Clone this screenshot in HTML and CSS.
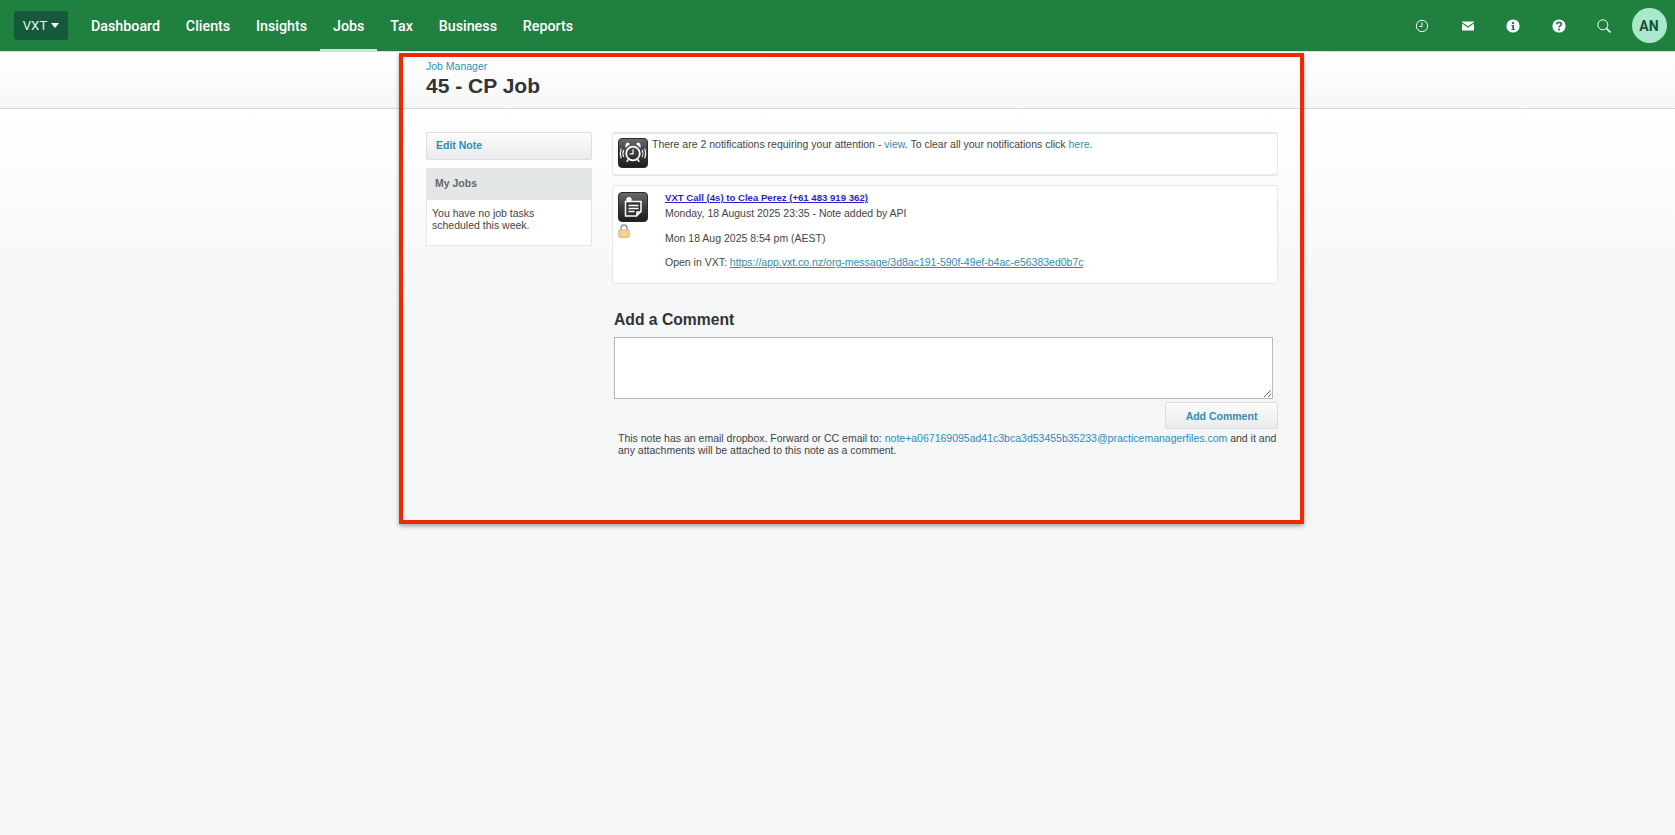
FILE: index.html
```html
<!DOCTYPE html>
<html lang="en">
<head>
    <meta charset="UTF-8">
    <meta name="viewport" content="width=device-width, initial-scale=1.0">
    <title>45 - CP Job</title>
    <link rel="stylesheet" href="styles.css">
</head>
<body>

<header class="topbar">
    <a href="#" class="org-switch">VXT <span class="caret"></span></a>
    <nav class="main-nav">
        <a href="#">Dashboard</a>
        <a href="#">Clients</a>
        <a href="#">Insights</a>
        <a href="#" class="active">Jobs</a>
        <a href="#">Tax</a>
        <a href="#">Business</a>
        <a href="#">Reports</a>
    </nav>
    <div class="top-icons">
        <!-- Recent -->
        <svg class="top-icon" viewBox="0 0 14 14" fill="none" stroke="#fff" stroke-width="1">
            <circle cx="7" cy="7" r="5.7"/>
            <path d="M7 3.4V7.5H4.2"/>
        </svg>
        <!-- Mail -->
        <svg class="top-icon" viewBox="0 0 14 14">
            <path fill="#fff" d="M1 2.5H13V11.5H1Z"/>
            <path fill="none" stroke="#1f8040" stroke-width="1.1" d="M1 3.8L7 8L13 3.8"/>
        </svg>
        <!-- Info -->
        <svg class="top-icon" viewBox="0 0 14 14">
            <circle cx="7" cy="7" r="6.6" fill="#fff"/>
            <circle cx="7" cy="3.9" r="1.2" fill="#1f8040"/>
            <path fill="#1f8040" d="M5.4 6H8V9.9H8.8V11H5.4V9.9H6.2V7.1H5.4Z"/>
        </svg>
        <!-- Help -->
        <svg class="top-icon" viewBox="0 0 14 14">
            <circle cx="7" cy="7" r="6.6" fill="#fff"/>
            <path fill="none" stroke="#1f8040" stroke-width="1.7" d="M4.6 5.3C4.8 3.8 5.9 3.3 7 3.3C8.4 3.3 9.4 4.1 9.4 5.2C9.4 6.6 7.1 6.7 7.1 8.6"/>
            <circle cx="7.1" cy="10.6" r="1.1" fill="#1f8040"/>
        </svg>
        <!-- Search -->
        <svg class="top-icon" viewBox="0 0 14 14" fill="none" stroke="#fff" stroke-width="1">
            <circle cx="5.8" cy="5.8" r="5"/>
            <path d="M9.4 9.4L13.4 13.4" stroke-width="1.5"/>
        </svg>
    </div>
    <div class="avatar">AN</div>
</header>

<div class="title-band">
    <div class="title-inner">
        <a href="#" class="crumb">Job Manager</a>
        <h1>45 - CP Job</h1>
    </div>
</div>

<main class="page">
    <aside class="sidebar">
        <a href="#" class="side-button">Edit Note</a>
        <div class="side-panel">
            <h3>My Jobs</h3>
            <p>You have no job tasks<br>scheduled this week.</p>
        </div>
    </aside>

    <section class="content">
        <div class="box notice">
            <svg class="tile" viewBox="0 0 30 30">
                <defs>
                    <linearGradient id="tileA" x1="0" y1="0" x2="0" y2="1">
                        <stop offset="0" stop-color="#6a6a6a"/>
                        <stop offset="0.5" stop-color="#3c3c3c"/>
                        <stop offset="1" stop-color="#1c1c1c"/>
                    </linearGradient>
                </defs>
                <rect x="0.5" y="0.5" width="29" height="29" rx="3.5" fill="url(#tileA)" stroke="#2a2a2a"/>
                <g fill="none" stroke="#fff">
                    <circle cx="15" cy="15.5" r="6.8" stroke-width="1.8"/>
                    <path d="M15 11.2V15.9H11.6" stroke-width="1.2"/>
                    <path d="M10.4 21.4L8.8 23.8M19.6 21.4L21.2 23.8" stroke-width="1.6"/>
                    <path d="M5.8 12C4.8 14 4.8 17 5.8 19M3.2 10.6C2 14 2 17 3.2 20.4M24.2 12C25.2 14 25.2 17 24.2 19M26.8 10.6C28 14 28 17 26.8 20.4" stroke-width="1.1"/>
                </g>
                <path fill="#fff" d="M7.6 9.8L12 6L10 4.6C8 4.8 6.8 7 7.6 9.8ZM22.4 9.8L18 6L20 4.6C22 4.8 23.2 7 22.4 9.8Z"/>
            </svg>
            <p>There are 2 notifications requiring your attention - <a href="#">view</a>. To clear all your notifications click <a href="#">here</a>.</p>
        </div>

        <div class="box note">
            <div class="note-icons">
                <svg class="tile" viewBox="0 0 30 30">
                    <rect x="0.5" y="0.5" width="29" height="29" rx="3.5" fill="url(#tileA)" stroke="#2a2a2a"/>
                    <path fill="#333" stroke="#fff" stroke-width="1.5" d="M7.5 9.5H23V19.5L18.5 24H7.5Z"/>
                    <path fill="#fff" d="M18 24.6L18.4 19.2H23.6Z"/>
                    <path stroke="#fff" stroke-width="1.3" d="M10.5 13.5H20.5M10.5 16.5H20.5M10.5 19.5H16.5"/>
                    <circle cx="11" cy="7.6" r="2.7" fill="#fff"/>
                </svg>
                <svg class="lock" viewBox="0 0 12 14">
                    <path fill="none" stroke="#8d8d8d" stroke-width="1.3" d="M3 6.5V4C3 2.2 4.3 1 6 1C7.7 1 9 2.2 9 4V6.5"/>
                    <rect x="0.8" y="6" width="10.4" height="7.4" rx="1" fill="#f5d590" stroke="#c9ab6d" stroke-width="0.8"/>
                </svg>
            </div>
            <div class="note-body">
                <a href="#" class="note-title">VXT Call (4s) to Clea Perez (+61 483 919 362)</a>
                <p class="note-meta">Monday, 18 August 2025 23:35 - Note added by API</p>
                <p>Mon 18 Aug 2025 8:54 pm (AEST)</p>
                <p>Open in VXT: <a href="#" class="plain-link">https://app.vxt.co.nz/org-message/3d8ac191-590f-49ef-b4ac-e56383ed0b7c</a></p>
            </div>
        </div>

        <form class="comment-form">
            <h2>Add a Comment</h2>
            <textarea></textarea>
            <div class="form-actions">
                <button type="button">Add Comment</button>
            </div>
            <p class="dropbox">This note has an email dropbox. Forward or CC email to: <a href="#">note+a067169095ad41c3bca3d53455b35233@practicemanagerfiles.com</a> and it and<br>any attachments will be attached to this note as a comment.</p>
        </form>
    </section>
</main>

<!-- Red annotation frame drawn over the page -->
<div class="highlight"></div>

</body>
</html>
```

FILE: styles.css
```css
* {
    box-sizing: border-box;
}
html, body {
    height: 100%;
}
body {
    margin: 0;
    font-family: "Liberation Sans", Arial, sans-serif;
    font-size: 10.5px;
    color: #444;
    background: #f5f6f8;
    position: relative;
}
a {
    color: #2f8db3;
    text-decoration: none;
}

/* Top bar */
.topbar {
    height: 52px;
    background-color: #1f8040;
    border-bottom: 1px solid #cfe6d6;
    display: flex;
    align-items: center;
    padding-left: 14px;
}
.org-switch {
    width: 54px;
    height: 29px;
    display: flex;
    align-items: center;
    justify-content: center;
    gap: 4px;
    background-color: #14593a;
    border-radius: 3px;
    color: #e4f1e8;
    font-family: Roboto, sans-serif;
    font-size: 13.2px;
}
.caret {
    width: 0;
    height: 0;
    border-left: 4.5px solid transparent;
    border-right: 4.5px solid transparent;
    border-top: 5px solid #fff;
}
.main-nav {
    display: flex;
    align-self: stretch;
    margin-left: 10px;
}
.main-nav a {
    display: flex;
    align-items: center;
    padding: 3px 12.9px 0;
    color: #fff;
    font-family: Roboto, sans-serif;
    font-weight: 500;
    font-size: 14.3px;
    border-bottom: 3px solid transparent;
    height: 52px;
}
.main-nav a.active {
    border-bottom-color: #c5e8d5;
}
.top-icons {
    margin-left: auto;
    display: flex;
    align-items: center;
    gap: 31.5px;
}
.top-icon {
    width: 14px;
    height: 14px;
    display: block;
}
.avatar {
    width: 35px;
    height: 35px;
    margin: 0 8.5px 0 20.5px;
    border-radius: 50%;
    background-color: #a9e8cb;
    color: #14513a;
    font-family: Roboto, sans-serif;
    font-weight: 700;
    font-size: 14px;
    display: flex;
    align-items: center;
    justify-content: center;
}

/* Title band */
.title-band {
    height: 57px;
    background: linear-gradient(#fff, #f6f7f8);
    border-bottom: 1px solid #d7d9dc;
}
.title-inner {
    padding: 8px 0 0 426px;
}
.crumb {
    display: block;
    line-height: 13px;
}
h1 {
    margin: 0;
    font-size: 21px;
    line-height: 26px;
    color: #333;
}

/* Columns */
.page {
    display: flex;
    gap: 20px;
    padding: 23px 0 0 426px;
    min-height: calc(100% - 109px);
    background: linear-gradient(#fff, #f5f6f8 200px);
}
.sidebar {
    width: 166px;
    flex: none;
}
.side-button {
    display: block;
    height: 28px;
    line-height: 25px;
    padding-left: 9px;
    font-weight: bold;
    color: #2f8db3;
    background: linear-gradient(#fcfcfc, #e9ebec);
    border: 1px solid #dcdee0;
    border-radius: 2px;
}
.side-panel {
    margin-top: 8px;
    background-color: #fff;
    border: 1px solid #e6e7e9;
    height: 78px;
}
.side-panel h3 {
    margin: 0;
    height: 31px;
    line-height: 28px;
    padding-left: 8px;
    font-size: 10.5px;
    color: #666;
    background-color: #e4e7e8;
}
.side-panel p {
    margin: 7px 0 0;
    padding: 0 5px;
    line-height: 12px;
}

/* Main column */
.content {
    width: 666px;
    flex: none;
}
.box {
    background-color: #fff;
    border: 1px solid #e6e7e9;
    border-radius: 3px;
    padding-left: 5px;
}
.notice {
    height: 44px;
    border-width: 2px 1px 2px 1px;
    display: flex;
    gap: 4px;
    padding-top: 4px;
}
.notice p {
    margin: 0;
    line-height: 12px;
}
.tile {
    width: 30px;
    height: 30px;
    flex: none;
    display: block;
}
.note {
    margin-top: 9px;
    height: 99px;
    display: flex;
    gap: 16px;
    padding-top: 6px;
}
.note-icons {
    width: 31px;
    flex: none;
}
.lock {
    display: block;
    width: 12px;
    height: 14px;
    margin-top: 2px;
}
.note-body p {
    margin: 11.5px 0 0;
    line-height: 13px;
}
.note-body .note-meta {
    margin-top: 3px;
}
.note-title {
    display: block;
    font-size: 9.6px;
    font-weight: bold;
    color: #2a1fd0;
    text-decoration: underline;
    line-height: 12px;
}
.plain-link {
    text-decoration: underline;
}

/* Comment form */
.comment-form {
    padding-left: 2px;
}
.comment-form h2 {
    margin: 27px 0 0;
    font-size: 15.7px;
    line-height: 18px;
    color: #333;
}
textarea {
    display: block;
    width: 659px;
    height: 62px;
    margin-top: 8px;
    background-color: #fff;
    border: 1px solid #b9babc;
    border-radius: 0;
}
.form-actions {
    display: flex;
    justify-content: flex-end;
    margin-top: 3px;
}
button {
    width: 113px;
    height: 27px;
    font-family: inherit;
    font-size: 10.5px;
    font-weight: bold;
    color: #2f8db3;
    background: linear-gradient(#fbfbfb, #e9ebec);
    border: 1px solid #dcdee0;
    border-radius: 2px;
    cursor: pointer;
}
.dropbox {
    margin: 3px 0 0 4px;
    width: 660px;
    line-height: 12px;
}

/* Annotation */
.highlight {
    position: absolute;
    left: 399px;
    top: 53px;
    width: 905px;
    height: 471px;
    border: 4px solid #f02a00;
    box-shadow: 0 2px 4px rgba(0, 0, 0, 0.35);
    pointer-events: none;
}
```
